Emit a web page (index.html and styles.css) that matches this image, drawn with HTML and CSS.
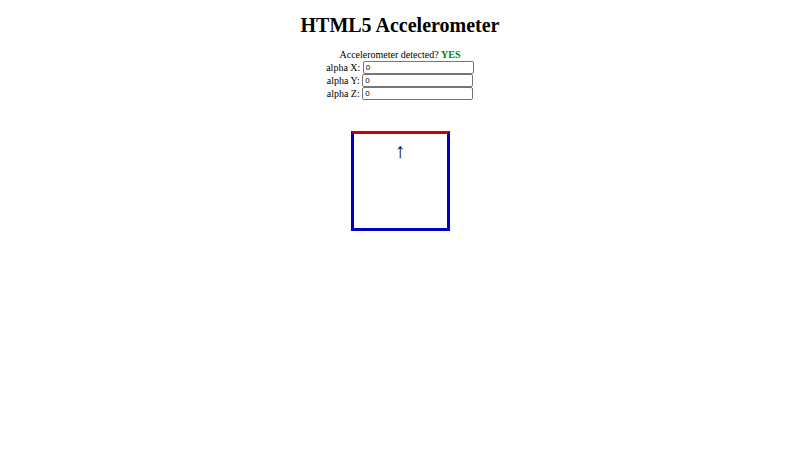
FILE: index.html
```html
<!DOCTYPE html>
<html>
<head>
<meta charset="utf-8">
<title>HTML5 Accelerometer</title>
<link rel="stylesheet" href="styles.css">
</head>
<body>
<h1 class="title">HTML5 Accelerometer</h1>
<div class="info">
  <div class="line first">Accelerometer detected? <b class="yes">YES</b></div>
  <div class="line">alpha X: <input class="field" type="text" value="0"></div>
  <div class="line">alpha Y: <input class="field" type="text" value="0"></div>
  <div class="line">alpha Z: <input class="field" type="text" value="0"></div>
</div>
<div class="box"><span class="arrow">↑</span></div>
</body>
</html>
```
FILE: styles.css
```css
body {
  margin: 5px;
  font-family: "Liberation Serif", "Times New Roman", serif;
  font-size: 10px;
  color: #000;
  background: #fff;
}
.title {
  font-size: 20px;
  text-align: center;
  margin: 8px 0 12px;
  line-height: 24px;
}
.info {
  text-align: center;
}
.line {
  height: 13px;
  line-height: 13px;
  margin: 0;
}
.line.first {
  height: 12px;
  line-height: 12px;
}
.yes {
  color: #008000;
}
.field {
  box-sizing: border-box;
  width: 111px;
  height: 13px;
  padding: 0 2px;
  margin: 0;
  font-family: "Liberation Sans", Arial, sans-serif;
  font-size: 8px;
  border: 1px solid #767676;
  border-radius: 2px;
  vertical-align: top;
}
.box {
  box-sizing: border-box;
  width: 99px;
  height: 100px;
  margin: 31px auto 0;
  border: 3px solid #0000c0;
  border-top-color: #d00000;
  text-align: center;
}
.arrow {
  display: block;
  font-size: 21px;
  line-height: 24px;
  margin-top: 5px;
  color: #000;
}
```
